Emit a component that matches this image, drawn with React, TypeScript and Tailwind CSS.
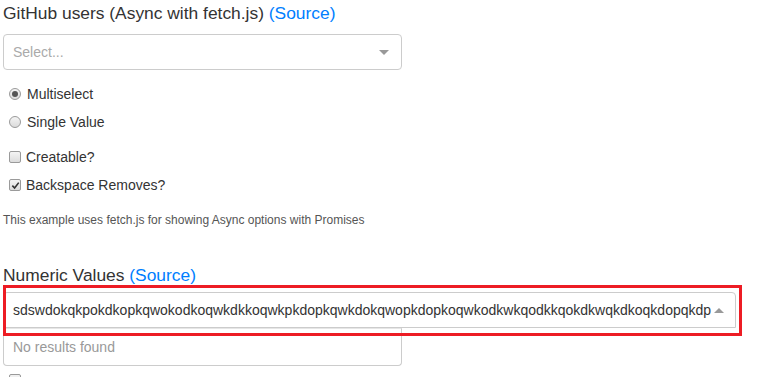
import React from 'react';

const font = { fontFamily: '"Liberation Sans", Arial, sans-serif' };

const Radio: React.FC<{ label: string; checked?: boolean }> = ({ label, checked }) => (
  <label className="flex items-center h-[28px] pl-[6px] text-[14px] text-[#333]">
    <span className="w-[12px] h-[12px] rounded-full border border-[#9a9a9a] bg-gradient-to-b from-[#f4f4f4] to-[#dcdcdc] flex items-center justify-center">
      {checked && <span className="w-[6px] h-[6px] rounded-full bg-[#555]" />}
    </span>
    <span className="ml-[6px]">{label}</span>
  </label>
);

const Check: React.FC<{ label: string; checked?: boolean }> = ({ label, checked }) => (
  <label className="flex items-center h-[28px] pl-[6px] text-[14px] text-[#333]">
    <span className="w-[12px] h-[12px] rounded-[2px] border border-[#9a9a9a] bg-gradient-to-b from-[#f4f4f4] to-[#dcdcdc] flex items-center justify-center">
      {checked && (
        <svg width="9" height="9" viewBox="0 0 10 10">
          <path d="M1.5 5.2 L4 7.8 L8.6 1.8" stroke="#333" strokeWidth="1.8" fill="none" />
        </svg>
      )}
    </span>
    <span className="ml-[5px]">{label}</span>
  </label>
);

const Arrow: React.FC<{ up?: boolean }> = ({ up }) => (
  <span
    className={
      up
        ? 'w-0 h-0 border-l-[5px] border-r-[5px] border-b-[5px] border-l-transparent border-r-transparent border-b-[#999]'
        : 'w-0 h-0 border-l-[5px] border-r-[5px] border-t-[5px] border-l-transparent border-r-transparent border-t-[#999]'
    }
  />
);

export default function App() {
  return (
    <div className="bg-white w-[763px] h-[377px] overflow-hidden pl-[3px]" style={font}>
      {/* GitHub users */}
      <h3 className="text-[17.4px] leading-[26px] text-[#333]">
        GitHub users (Async with fetch.js) <a className="text-[#007eff]">(Source)</a>
      </h3>
      <div className="mt-[8px] w-[399px] h-[36px] border border-[#ccc] rounded-[4px] flex items-center justify-between pl-[9px] pr-[12px]">
        <span className="text-[14px] text-[#aaa]">Select...</span>
        <Arrow />
      </div>
      <div className="mt-[10px]">
        <Radio label="Multiselect" checked />
        <Radio label="Single Value" />
      </div>
      <div className="mt-[7px]">
        <Check label="Creatable?" />
        <Check label="Backspace Removes?" checked />
      </div>
      <p className="mt-[12px] text-[12px] leading-[18px] text-[#555]">
        This example uses fetch.js for showing Async options with Promises
      </p>

      {/* Numeric values */}
      <h3 className="mt-[33px] text-[17.4px] leading-[26px] text-[#333]">
        Numeric Values <a className="text-[#007eff]">(Source)</a>
      </h3>
      <div className="relative mt-[4px] w-[733px] h-[36px] border border-[#ccc] rounded-t-[4px] flex items-center justify-between pl-[9px] pr-[11px]">
        <span className="text-[14px] text-[#333]">
          sdswdokqkpokdkopkqwokodkoqwkdkkoqwkpkdopkqwkdokqwopkdopkoqwkodkwkqodkkqokdkwqkdkoqkdopqkdp
        </span>
        <Arrow up />
        <div className="absolute left-[-1px] top-[-8px] w-[739px] h-[51px] border-[3px] border-[#ed1c24]" />
      </div>
      <div className="w-[399px] h-[38px] border border-t-[#e6e6e6] border-[#ccc] rounded-b-[4px] flex items-center pl-[9px]">
        <span className="text-[14px] text-[#999]">No results found</span>
      </div>
      <div className="mt-[8px] pl-[6px]">
        <span className="block w-[12px] h-[12px] rounded-[2px] border border-[#9a9a9a] bg-[#f0f0f0]" />
      </div>
    </div>
  );
}
